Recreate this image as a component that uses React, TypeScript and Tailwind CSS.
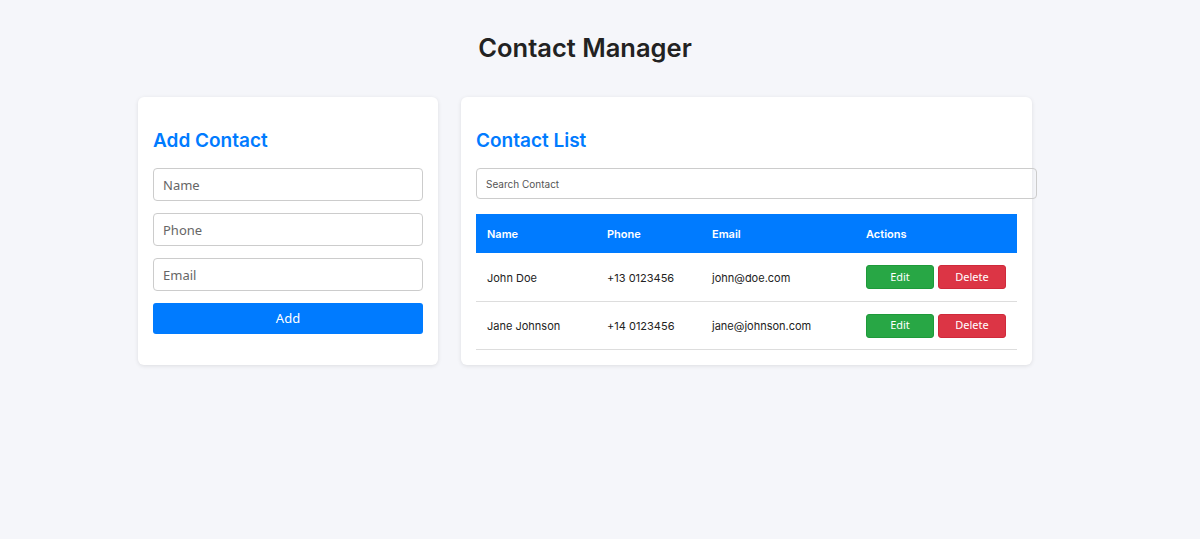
import { useState } from 'react';

interface Contact {
  name: string;
  phone: string;
  email: string;
}

const initialContacts: Contact[] = [
  { name: 'John Doe', phone: '+13 0123456', email: 'john@doe.com' },
  { name: 'Jane Johnson', phone: '+14 0123456', email: 'jane@johnson.com' },
];

const heading = "font-['Inter',sans-serif]";
const body = "font-['Noto_Sans','Open_Sans',sans-serif]";

export default function App() {
  const [contacts] = useState<Contact[]>(initialContacts);
  const [search, setSearch] = useState('');

  const shown = contacts.filter((c) =>
    c.name.toLowerCase().includes(search.toLowerCase())
  );

  return (
    <div className="min-h-[539px] w-full bg-[#f5f6fa] pr-[30px] pt-[33px]">
      <h1 className={`${heading} text-center text-[25.5px] font-semibold leading-[30px] text-[#222222]`}>
        Contact Manager
      </h1>

      <div className="mt-[34px] flex items-start justify-center gap-[23px]">
        {/* add form */}
        <div className="w-[300px] rounded-[6px] bg-white px-[15px] pb-[31px] pt-[31px] shadow-[0_1px_4px_rgba(0,0,0,0.1)]">
          <h2 className={`${heading} text-[19px] font-semibold leading-[26px] text-[#007bff]`}>
            Add Contact
          </h2>
          <div className="mt-[14px] flex flex-col gap-[12px]">
            {['Name', 'Phone', 'Email'].map((p) => (
              <input
                key={p}
                placeholder={p}
                className={`${body} h-[33px] w-full rounded-[4px] border border-[#cccccc] px-[9px] text-[13px] text-[#333] outline-none placeholder:text-[#666]`}
              />
            ))}
            <button className={`${body} h-[31px] w-full rounded-[3px] bg-[#007bff] text-[13px] text-white`}>
              Add
            </button>
          </div>
        </div>

        {/* list */}
        <div className="w-[571px] rounded-[6px] bg-white px-[15px] pb-[15px] pt-[31px] shadow-[0_1px_4px_rgba(0,0,0,0.1)]">
          <h2 className={`${heading} text-[19px] font-semibold leading-[26px] text-[#007bff]`}>
            Contact List
          </h2>
          <input
            value={search}
            onChange={(e) => setSearch(e.target.value)}
            placeholder="Search Contact"
            className={`${heading} mt-[14px] h-[31px] w-[561px] rounded-[4px] border border-[#cccccc] px-[9px] text-[10px] text-[#333] outline-none placeholder:text-[#555]`}
          />
          <table className={`${heading} mt-[15px] w-full border-collapse text-[11px] text-[#222]`}>
            <thead>
              <tr className="h-[39px] bg-[#007bff] text-left text-white">
                <th className="w-[120px] pl-[11px] pt-[1px] font-semibold">Name</th>
                <th className="w-[105px] pl-[11px] pt-[1px] font-semibold">Phone</th>
                <th className="w-[154px] pl-[11px] pt-[1px] font-semibold">Email</th>
                <th className="pl-[11px] pt-[1px] font-semibold">Actions</th>
              </tr>
            </thead>
            <tbody>
              {shown.map((c) => (
                <tr key={c.email} className="h-[48px] border-b border-[#dddddd]">
                  <td className="pl-[11px] pt-[2px]">{c.name}</td>
                  <td className="pl-[11px] pt-[2px]">{c.phone}</td>
                  <td className="pl-[11px] pt-[2px]">{c.email}</td>
                  <td className="pl-[11px] pt-[1px]">
                    <div className={`${body} flex gap-[4px] text-[11px] text-white`}>
                      <button className="h-[24px] w-[68px] rounded-[3px] border border-[#1e9a3a] bg-[#28a745]">
                        Edit
                      </button>
                      <button className="h-[24px] w-[68px] rounded-[3px] border border-[#cf2a3b] bg-[#dc3545]">
                        Delete
                      </button>
                    </div>
                  </td>
                </tr>
              ))}
            </tbody>
          </table>
        </div>
      </div>
    </div>
  );
}
